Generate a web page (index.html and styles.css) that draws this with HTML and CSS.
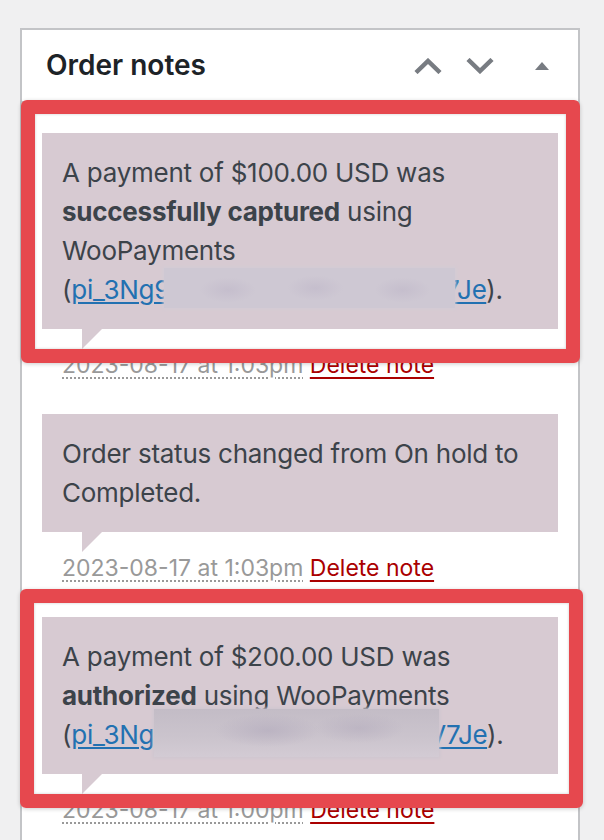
FILE: index.html
```html
<!DOCTYPE html>
<html lang="en">
<head>
<meta charset="utf-8">
<title>Order notes</title>
<link rel="stylesheet" href="styles.css">
</head>
<body>
<div class="postbox">
  <div class="postbox-header">
    <h2 class="hndle">Order notes</h2>
    <div class="handle-actions">
      <button class="handle-order" type="button" aria-label="Move up">
        <svg width="28" height="16" viewBox="0 0 28 16"><polyline points="2,14.5 14,3 26,14.5" fill="none" stroke="#787c82" stroke-width="4.5"/></svg>
      </button>
      <button class="handle-order" type="button" aria-label="Move down">
        <svg width="28" height="16" viewBox="0 0 28 16"><polyline points="2,1.5 14,13 26,1.5" fill="none" stroke="#787c82" stroke-width="4.5"/></svg>
      </button>
      <button class="toggle" type="button" aria-label="Toggle panel">
        <svg width="14" height="8" viewBox="0 0 14 8"><polygon points="0,8 7,0 14,8" fill="#787c82"/></svg>
      </button>
    </div>
  </div>
  <ul class="order-notes">
    <li class="note">
      <div class="note-content">
        <p>A payment of $100.00 USD was <strong>successfully captured</strong> using WooPayments <span class="nowrap">(<a href="#" class="txn">pi_3Ng9<span class="redact redact-a"></span>7Je</a>).</span></p>
        <div class="highlight highlight-a"></div>
      </div>
      <p class="meta"><abbr class="date" title="2023-08-17 13:03">2023-08-17 at 1:03pm</abbr> <a href="#" class="delete-note">Delete note</a></p>
    </li>
    <li class="note">
      <div class="note-content">
        <p>Order status changed from On hold to Completed.</p>
      </div>
      <p class="meta"><abbr class="date" title="2023-08-17 13:03">2023-08-17 at 1:03pm</abbr> <a href="#" class="delete-note">Delete note</a></p>
    </li>
    <li class="note">
      <div class="note-content">
        <p>A payment of $200.00 USD was <strong>authorized</strong> using WooPayments <span class="nowrap">(<a href="#" class="txn">pi_3Ng<span class="redact redact-b"></span>V7Je</a>).</span></p>
        <div class="highlight highlight-b"></div>
      </div>
      <p class="meta"><abbr class="date" title="2023-08-17 13:00">2023-08-17 at 1:00pm</abbr> <a href="#" class="delete-note">Delete note</a></p>
    </li>
  </ul>
</div>
</body>
</html>
```

FILE: styles.css
```css
html, body {
  margin: 0;
  padding: 0;
}

body {
  background: #f0f0f1;
  font-family: Inter, "Noto Sans", "Liberation Sans", sans-serif;
  color: #3c434a;
  height: 840px;
  overflow: hidden;
}

.postbox {
  width: 560px;
  margin: 28px 0 0 20px;
  box-sizing: border-box;
  border: 2px solid #c3c4c7;
  border-bottom: none;
  background: #fff;
  min-height: 900px;
}

.postbox-header {
  display: flex;
  align-items: center;
  justify-content: space-between;
  height: 71px;
  border-bottom: 2px solid #c3c4c7;
}

.hndle {
  margin: 0;
  padding: 0 24px;
  font-size: 28px;
  font-weight: 600;
  line-height: 39px;
  color: #1d2327;
}

.handle-actions {
  display: flex;
  align-items: center;
  height: 100%;
}

.handle-actions button {
  display: flex;
  align-items: center;
  justify-content: center;
  height: 100%;
  padding: 0;
  border: 0;
  background: none;
}

.handle-order {
  width: 52px;
}

.toggle {
  width: 72px;
}

.toggle svg {
  margin-top: 1px;
}

.order-notes {
  list-style: none;
  margin: 0;
  padding: 30px 0 0;
}

.note {
  padding: 0 20px;
  margin: 0 0 12px;
}

.note-content {
  position: relative;
  background: #d7cad2;
  padding: 20px;
}

.note-content::after {
  content: "";
  position: absolute;
  left: 40px;
  bottom: -20px;
  width: 0;
  height: 0;
  border-style: solid;
  border-width: 20px 20px 0 0;
  border-color: #d7cad2 transparent;
}

.note-content p {
  margin: 0;
  font-size: 26px;
  line-height: 39px;
  letter-spacing: -0.25px;
}

.note-content strong {
  font-weight: 700;
}

.nowrap {
  white-space: nowrap;
}

.txn {
  color: #2271b1;
  text-decoration: underline;
  text-decoration-thickness: 2px;
  text-underline-offset: 3px;
}

.redact {
  display: inline-block;
  position: relative;
  z-index: 1;
  vertical-align: top;
}

.redact-a {
  width: 291px;
  height: 40px;
  margin: -2px -10px -3px -6px;
  background:
    radial-gradient(ellipse 40px 18px at 22% 55%, rgba(190, 182, 200, 0.55), transparent 70%),
    radial-gradient(ellipse 40px 18px at 52% 50%, rgba(190, 182, 200, 0.55), transparent 70%),
    radial-gradient(ellipse 40px 18px at 82% 55%, rgba(190, 182, 200, 0.55), transparent 70%),
    #cec8d3;
  box-shadow: 0 0 3px 1px #d2ccd6;
}

.redact-b {
  width: 285px;
  height: 48px;
  margin: -6px -11px -6px 0;
  background:
    radial-gradient(ellipse 70px 22px at 40% 45%, rgba(178, 170, 188, 0.6), transparent 75%),
    radial-gradient(ellipse 60px 20px at 72% 40%, rgba(178, 170, 188, 0.5), transparent 75%),
    linear-gradient(#c3bcc6, #cbc4cd 60%, #d3cbd4);
  box-shadow: 0 0 3px 1px #cdc5cf;
}

.highlight {
  position: absolute;
  z-index: 2;
  border: 14px solid #e6484e;
  border-radius: 6px;
  box-shadow: 0 1px 4px rgba(0, 0, 0, 0.2), inset 0 0 3px rgba(0, 0, 0, 0.2);
  pointer-events: none;
}

.highlight-a {
  top: -33px;
  left: -21px;
  right: -22px;
  bottom: -34px;
}

.highlight-b {
  top: -28px;
  left: -22px;
  right: -25px;
  bottom: -34px;
}

.meta {
  margin: 0;
  padding: 20px;
  font-size: 23px;
  line-height: 33px;
  color: #999;
}

.date {
  text-decoration: underline dotted #999;
  text-decoration-thickness: 2px;
  text-underline-offset: 4px;
}

.delete-note {
  color: #a00;
  text-decoration: underline;
  text-decoration-thickness: 2px;
  text-underline-offset: 4px;
}
```
